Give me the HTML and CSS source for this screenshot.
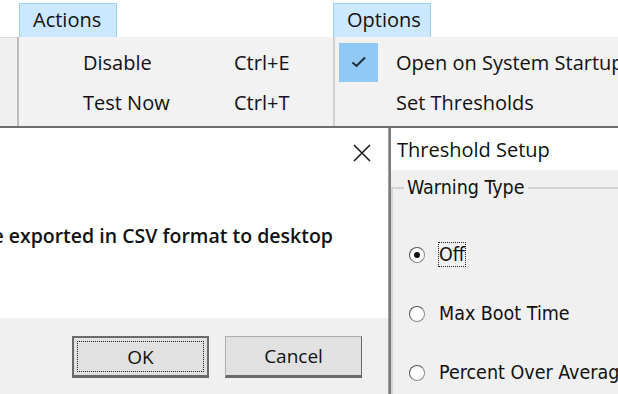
FILE: index.html
```html
<!DOCTYPE html>
<html lang="en">
<head>
    <meta charset="UTF-8">
    <title>Menus and dialogs</title>
    <link rel="stylesheet" href="styles.css">
</head>
<body>

<div class="menubar">
    <div class="menubar_item menubar_item--actions">Actions</div>
    <div class="menubar_item menubar_item--options">Options</div>
</div>

<div class="menus">
    <div class="menus_stub"></div>
    <div class="dropdown dropdown--actions">
        <div class="dropdown_row">
            <span class="dropdown_label">Disable</span>
            <span class="dropdown_key">Ctrl+E</span>
        </div>
        <div class="dropdown_row">
            <span class="dropdown_label">Test Now</span>
            <span class="dropdown_key">Ctrl+T</span>
        </div>
    </div>
    <div class="dropdown dropdown--options">
        <div class="dropdown_row">
            <span class="dropdown_check">
                <svg width="16" height="12" viewBox="0 0 16 12"><path d="M1.5 6.5 L5.5 10 L14 1.5" fill="none" stroke="#1f2a33" stroke-width="2"/></svg>
            </span>
            <span class="dropdown_label">Open on System Startup</span>
        </div>
        <div class="dropdown_row">
            <span class="dropdown_check dropdown_check--empty"></span>
            <span class="dropdown_label">Set Thresholds</span>
        </div>
    </div>
</div>

<div class="lower">
    <div class="dialog">
        <div class="dialog_body">
            <div class="dialog_close">
                <svg width="18" height="18" viewBox="0 0 18 18"><path d="M1 1 L17 17 M17 1 L1 17" stroke="#1a1a1a" stroke-width="1.6"/></svg>
            </div>
            <div class="dialog_message"><span>All results will be exported in CSV format to desktop</span></div>
        </div>
        <div class="dialog_footer">
            <button class="dialog_button dialog_button--default"><span class="dialog_focus">OK</span></button>
            <button class="dialog_button">Cancel</button>
        </div>
    </div>

    <div class="threshold">
        <div class="threshold_title">Threshold Setup</div>
        <div class="threshold_body">
            <fieldset class="group">
                <legend class="group_legend">Warning Type</legend>
                <label class="radio">
                    <span class="radio_dot radio_dot--checked"></span>
                    <span class="radio_text radio_text--focus">Off</span>
                </label>
                <label class="radio">
                    <span class="radio_dot"></span>
                    <span class="radio_text">Max Boot Time</span>
                </label>
                <label class="radio">
                    <span class="radio_dot"></span>
                    <span class="radio_text">Percent Over Average</span>
                </label>
            </fieldset>
        </div>
    </div>
</div>

</body>
</html>
```

FILE: styles.css
```css
html, body {
    margin: 0;
    padding: 0;
}

body {
    width: 618px;
    height: 394px;
    overflow: hidden;
    background: #fff;
    font-family: "Open Sans", "Noto Sans", sans-serif;
    font-size: 20px;
    color: #111;
}

/* menu bar */
.menubar {
    height: 37px;
    display: flex;
    align-items: flex-end;
    background: #fff;
}

.menubar_item {
    box-sizing: border-box;
    height: 34px;
    width: 98px;
    padding-left: 13px;
    line-height: 32px;
    background: #cce8ff;
    border: 1px solid #99d1ff;
    border-bottom: none;
}

.menubar_item--actions {
    margin-left: 19px;
}

.menubar_item--options {
    margin-left: 216px;
}

/* dropdowns */
.menus {
    display: flex;
    height: 91px;
    border-bottom: 2px solid #6e6e6e;
    box-sizing: border-box;
}

.menus_stub {
    width: 17px;
    flex-shrink: 0;
    background: #f0f0f0;
    border-top: 1px solid #d9d9d9;
}

.dropdown {
    background: #f2f2f2;
    border-left: 2px solid #bdbdbd;
    box-sizing: border-box;
    padding-top: 5px;
}

.dropdown--actions {
    width: 316px;
    flex-shrink: 0;
}

.dropdown--options {
    flex: 1;
    min-width: 0;
    overflow: hidden;
    border-left-color: #d0d0d0;
    padding-left: 4px;
}

.dropdown_row {
    height: 40px;
    display: flex;
    align-items: center;
    white-space: nowrap;
}

.dropdown--actions .dropdown_label {
    margin-left: 64px;
    width: 151px;
}

.dropdown_check {
    width: 39px;
    height: 39px;
    flex-shrink: 0;
    background: #90c8f6;
    display: flex;
    align-items: center;
    justify-content: center;
    margin-right: 18px;
}

.dropdown_check--empty {
    background: transparent;
}

/* dialog */
.lower {
    display: flex;
    height: 266px;
}

.dialog {
    width: 388px;
    flex-shrink: 0;
    display: flex;
    flex-direction: column;
    background: #fff;
    border-right: 1px solid #a0a0a0;
    overflow: hidden;
}

.dialog_body {
    height: 190px;
    position: relative;
}

.dialog_close {
    position: absolute;
    left: 353px;
    top: 13px;
}

.dialog_message {
    margin-top: 94px;
    padding-right: 55px;
    display: flex;
    justify-content: flex-end;
    white-space: nowrap;
    font-weight: 600;
    font-size: 19.5px;
    color: #121212;
}

.dialog_footer {
    flex: 1;
    background: #f0f0f0;
    display: flex;
    padding: 18px 0 0 72px;
    gap: 16px;
}

.dialog_button {
    box-sizing: border-box;
    width: 137px;
    height: 42px;
    background: #e1e1e1;
    border: 1px solid #adadad;
    border-right-color: #6a6a6a;
    border-bottom: 3px solid #6a6a6a;
    font-family: "Open Sans", "Noto Sans", sans-serif;
    font-size: 19px;
    color: #111;
    padding: 0;
}

.dialog_button--default {
    border: 2px solid #6a6a6a;
    border-bottom-width: 3px;
    padding: 3px;
}

.dialog_focus {
    display: block;
    height: 100%;
    border: 1px dotted #222;
    box-sizing: border-box;
    line-height: 31px;
}

/* threshold panel */
.threshold {
    flex: 1;
    min-width: 0;
    display: flex;
    flex-direction: column;
    border-left: 2px solid #7a7a7a;
    overflow: hidden;
}

.threshold_title {
    height: 42px;
    background: #fff;
    padding-left: 6px;
    line-height: 44px;
    white-space: nowrap;
}

.threshold_body {
    flex: 1;
    background: #f0f0f0;
    padding-top: 6px;
}

.group {
    margin: 0;
    padding: 26px 0 0 11px;
    border: none;
    border-top: 2px solid #d4d4d4;
    border-left: 2px solid #d4d4d4;
    font-family: "DejaVu Sans Condensed", "Liberation Sans", sans-serif;
    font-size: 19.5px;
    color: #111;
}

.group_legend {
    padding: 0 3px;
}

.radio {
    display: flex;
    align-items: center;
    height: 59px;
    padding-left: 5px;
    white-space: nowrap;
}

.radio_dot {
    width: 16px;
    height: 16px;
    flex-shrink: 0;
    border-radius: 50%;
    border: 1px solid #8a8a8a;
    border-top-color: #555;
    border-left-color: #555;
    background: #fff;
    box-sizing: border-box;
    margin-right: 14px;
    position: relative;
}

.radio_dot--checked::after {
    content: "";
    position: absolute;
    left: 4px;
    top: 4px;
    width: 6px;
    height: 6px;
    border-radius: 50%;
    background: #111;
}

.radio_text--focus {
    outline: 1px dotted #222;
}
```
